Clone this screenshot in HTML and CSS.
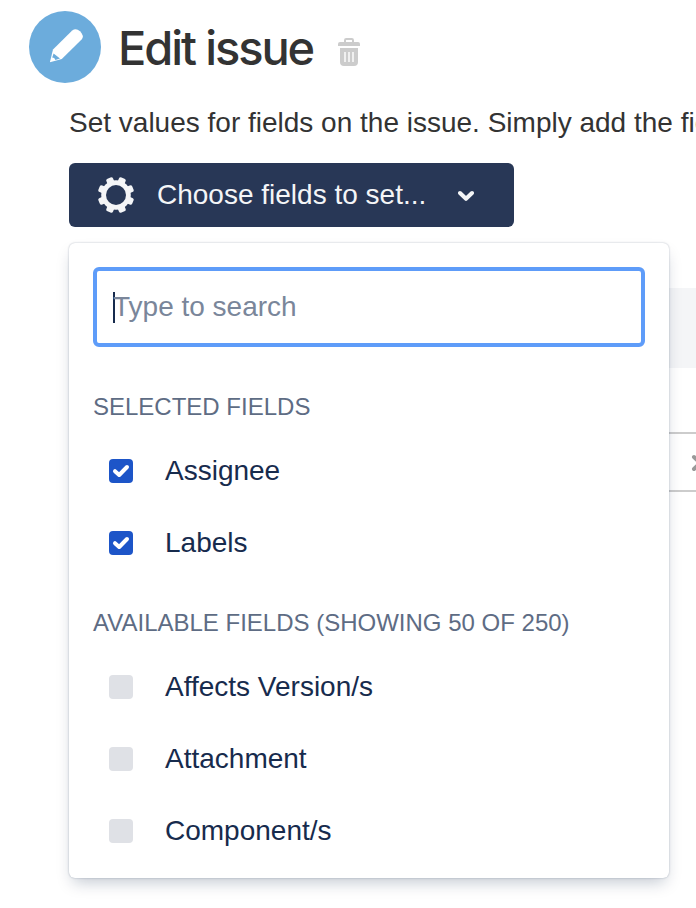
FILE: index.html
```html
<!DOCTYPE html>
<html lang="en">
<head>
  <meta charset="UTF-8" />
  <meta name="viewport" content="width=device-width, initial-scale=1.0" />
  <title>Edit issue</title>
  <link rel="stylesheet" href="styles.css">
</head>
<body>
  <header class="page-header">
    <span class="action-icon">
      <svg width="72" height="72" viewBox="0 0 72 72">
        <path d="M24 38.6 L43.2 19.6 Q46.8 16.4 51 20.2 Q55.6 24.6 52.6 28.6 L32.8 48 L20.9 51.2 Z" fill="#fff" />
        <path d="M24.6 42.4 L31 47.6 L26.4 48.9 Q25.6 46.6 23.2 46.6 Z" fill="#6cacdc" />
      </svg>
    </span>
    <h1>Edit issue</h1>
    <button class="delete-btn" aria-label="Delete">
      <svg width="22" height="28" viewBox="0 0 22 28">
        <path d="M7 4.5 V2.2 Q7 1 8.2 1 H13.8 Q15 1 15 2.2 V4.5" fill="none" stroke="#ccc" stroke-width="2" />
        <path d="M0 8 V6 Q0 4 2 4 H20 Q22 4 22 6 V8 Z M2 10 H20 V24 Q20 28 16 28 H6 Q2 28 2 24 Z" fill="#ccc" />
        <path d="M7 14 V24 M11 14 V24 M15 14 V24" stroke="#fff" stroke-width="1.4" />
      </svg>
    </button>
  </header>

  <main>
    <p class="description">Set values for fields on the issue. Simply add the fields you would like to set.</p>

    <div class="field-picker">
      <button class="picker-btn">
        <svg class="gear" width="36" height="36" viewBox="-18 -18 36 36" fill="#f4f5f7">
          <rect x="-3.6" y="-18.3" width="7.2" height="36.6" rx="2" transform="rotate(22.5)" />
          <rect x="-3.6" y="-18.3" width="7.2" height="36.6" rx="2" transform="rotate(67.5)" />
          <rect x="-3.6" y="-18.3" width="7.2" height="36.6" rx="2" transform="rotate(112.5)" />
          <rect x="-3.6" y="-18.3" width="7.2" height="36.6" rx="2" transform="rotate(157.5)" />
          <circle r="14.8" />
          <circle r="10" fill="#283756" />
        </svg>
        <span class="picker-label">Choose fields to set...</span>
        <svg class="chevron" width="16" height="12" viewBox="0 0 16 12">
          <path d="M2 3 L8 8.8 L14 3" fill="none" stroke="#f4f5f7" stroke-width="4" stroke-linecap="round" stroke-linejoin="round" />
        </svg>
      </button>

      <div class="dropdown">
        <div class="search">
          <span class="caret"></span>
          <span class="placeholder">Type to search</span>
        </div>

        <h2>Selected fields</h2>
        <ul>
          <li>
            <span class="checkbox checked"><svg width="24" height="24" viewBox="0 0 24 24"><path d="M6 12.2 L10.2 16 L18 8" /></svg></span>
            <span>Assignee</span>
          </li>
          <li>
            <span class="checkbox checked"><svg width="24" height="24" viewBox="0 0 24 24"><path d="M6 12.2 L10.2 16 L18 8" /></svg></span>
            <span>Labels</span>
          </li>
        </ul>

        <h2>Available fields (showing 50 of 250)</h2>
        <ul>
          <li><span class="checkbox"></span><span>Affects Version/s</span></li>
          <li><span class="checkbox"></span><span>Attachment</span></li>
          <li><span class="checkbox"></span><span>Component/s</span></li>
        </ul>
      </div>
    </div>

    <div class="section-bar"></div>
    <div class="field-row">
      <svg width="18" height="18" viewBox="0 0 18 18">
        <path d="M3 3 L15 15 M15 3 L3 15" stroke="#999" stroke-width="4" stroke-linecap="round" />
      </svg>
    </div>
  </main>
</body>
</html>
```
FILE: styles.css
```css
* {
  box-sizing: border-box;
}
body {
  margin: 0;
  height: 908px;
  overflow: hidden;
  background: #fff;
  color: #333;
  font-family: "Liberation Sans", Arial, sans-serif;
  font-size: 28px;
}
button {
  border: 0;
  padding: 0;
  background: none;
  font: inherit;
}
svg {
  display: block;
}
.page-header {
  display: flex;
  align-items: center;
  padding: 11px 0 0 29px;
}
.action-icon {
  width: 72px;
  height: 72px;
  border-radius: 50%;
  background: #6cacdc;
}
.page-header h1 {
  width: 220px;
  margin: 1px 0 0 17px;
  font-family: Inter, sans-serif;
  font-size: 47px;
  font-weight: 450;
  line-height: 56px;
  letter-spacing: -2.1px;
  white-space: nowrap;
}
.delete-btn {
  margin-top: 10px;
}
main {
  padding-left: 69px;
}
.description {
  margin: 24px 0;
  overflow: hidden;
  line-height: 32px;
  white-space: nowrap;
}
.field-picker {
  position: relative;
}
.picker-btn {
  display: flex;
  align-items: center;
  width: 445px;
  height: 64px;
  padding-left: 29px;
  border-radius: 6px;
  background: #283756;
  color: #f4f5f7;
}
.gear {
  margin-top: -1px;
}
.picker-label {
  width: 300px;
  padding-left: 23px;
  text-align: left;
  white-space: nowrap;
}
.chevron {
  margin: 2px 0 0 24px;
}
.dropdown {
  position: absolute;
  top: 80px;
  left: 0;
  z-index: 1;
  width: 600px;
  height: 635px;
  padding: 24px 0;
  border-radius: 6px;
  background: #fff;
  color: #172b4d;
  box-shadow: 0 8px 16px -4px rgba(9, 30, 66, 0.25), 0 0 2px rgba(9, 30, 66, 0.31);
}
.search {
  display: flex;
  align-items: center;
  height: 80px;
  margin: 0 24px 16px;
  padding-left: 16px;
  border: 4px solid #5e9cf9;
  border-radius: 6px;
}
.caret {
  width: 2px;
  height: 31px;
  margin-right: -2px;
  background: #172b4d;
}
.placeholder {
  color: #7a869a;
}
.dropdown h2 {
  height: 72px;
  margin: 0;
  padding: 30px 24px 0;
  color: #5e6c84;
  font-size: 24px;
  font-weight: 400;
  line-height: 28px;
  text-transform: uppercase;
  white-space: nowrap;
}
.dropdown ul {
  margin: 0;
  padding: 0;
  list-style: none;
}
.dropdown li {
  display: flex;
  align-items: center;
  gap: 32px;
  height: 72px;
  padding-left: 40px;
}
.checkbox {
  width: 24px;
  height: 24px;
  border-radius: 4px;
  background: #dfe1e6;
}
.checked {
  background: #1d55c8;
}
.checked path {
  fill: none;
  stroke: #fff;
  stroke-width: 4;
  stroke-linecap: round;
  stroke-linejoin: round;
}
.section-bar {
  height: 80px;
  margin-top: 61px;
  background: #f4f5f7;
}
.field-row {
  display: flex;
  align-items: center;
  height: 60px;
  margin-top: 64px;
  padding: 2px 0 0 622px;
  border-top: 2px solid #ccc;
  border-bottom: 2px solid #ccc;
}
.field-row svg {
  flex: none;
}
```
